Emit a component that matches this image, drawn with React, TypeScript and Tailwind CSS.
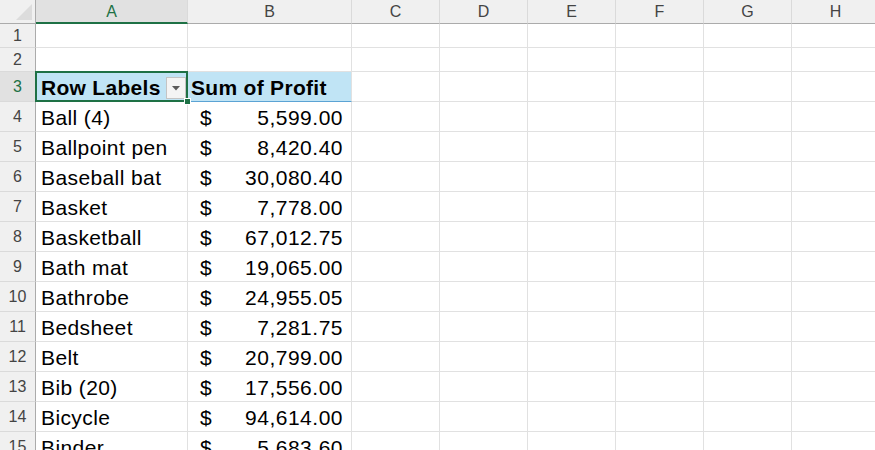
import React from "react";

const data: [string, string][] = [
  ["Ball (4)", "5,599.00"],
  ["Ballpoint pen", "8,420.40"],
  ["Baseball bat", "30,080.40"],
  ["Basket", "7,778.00"],
  ["Basketball", "67,012.75"],
  ["Bath mat", "19,065.00"],
  ["Bathrobe", "24,955.05"],
  ["Bedsheet", "7,281.75"],
  ["Belt", "20,799.00"],
  ["Bib (20)", "17,556.00"],
  ["Bicycle", "94,614.00"],
  ["Binder", "5,683.60"],
];

const cols = ["A", "B", "C", "D", "E", "F", "G", "H"];
const emptyCols = ["C", "D", "E", "F", "G", "H"];

const font = { fontFamily: '"Liberation Sans", Arial, sans-serif' };

function RowHeader({ n, h, selected }: { n: number; h: string; selected?: boolean }) {
  return (
    <div
      className={`${h} flex items-center justify-center border-r border-b border-r-[#ababab] border-b-[#dadada] pt-px text-[16px] ${
        selected ? "bg-[#e1e1e1] text-[#1e7145]" : "bg-[#f0f0f0] text-[#444]"
      }`}
    >
      {n}
    </div>
  );
}

function Empty({ h }: { h: string }) {
  return <div className={`${h} border-r border-b border-[#e1e1e1] bg-white`} />;
}

export default function App() {
  return (
    <div className="relative h-[450px] w-[875px] overflow-hidden bg-white" style={font}>
      <div className="grid w-[880px] grid-cols-[36px_152px_164px_repeat(6,88px)]">
        {/* header row */}
        <div className="relative h-[24px] border-r border-b border-r-[#ababab] border-b-[#ababab] bg-[#f0f0f0]">
          <svg className="absolute bottom-[3px] right-[3px]" width="16" height="16" viewBox="0 0 16 16">
            <polygon points="16,0 16,16 0,16" fill="#dcdcdc" />
          </svg>
        </div>
        {cols.map((c) => (
          <div
            key={c}
            className={`flex h-[24px] items-center justify-center border-r text-[16px] ${
              c === "A"
                ? "border-b-2 border-b-[#1e7145] border-r-[#dadada] bg-[#e1e1e1] text-[#1e7145]"
                : "border-b border-b-[#ababab] border-r-[#dadada] bg-[#f0f0f0] text-[#444]"
            }`}
          >
            <span className="pt-px">{c}</span>
          </div>
        ))}

        {/* rows 1-2 */}
        {[1, 2].map((n) => (
          <React.Fragment key={n}>
            <RowHeader n={n} h="h-[24px]" />
            {cols.map((c) => (
              <Empty key={c} h="h-[24px]" />
            ))}
          </React.Fragment>
        ))}

        {/* row 3 pivot header */}
        <RowHeader n={3} h="h-[30px]" selected />
        <div className="relative flex h-[30px] items-end border-b border-[#5ba3d4] bg-[#c0e4f5] pb-px pl-[5px] text-[21px] font-bold leading-[24px] tracking-[0.3px] text-black">
          Row Labels
          <div className="absolute right-[2px] top-[5px] flex h-[22px] w-[20px] items-center justify-center border border-[#c4c4c4] bg-[#f4f4f4]">
            <svg width="8" height="5" viewBox="0 0 8 5">
              <polygon points="0,0 8,0 4,4.5" fill="#5a5a5a" />
            </svg>
          </div>
        </div>
        <div className="flex h-[30px] items-end border-r border-b border-r-[#e1e1e1] border-b-[#5ba3d4] bg-[#c0e4f5] pb-px pl-[3px] text-[21px] font-bold leading-[24px] tracking-[0.3px] text-black">
          Sum of Profit
        </div>
        {emptyCols.map((c) => (
          <Empty key={c} h="h-[30px]" />
        ))}

        {/* data rows */}
        {data.map(([label, val], i) => (
          <React.Fragment key={label}>
            <RowHeader n={i + 4} h="h-[30px]" />
            <div className="flex h-[30px] items-end border-r border-b border-[#e1e1e1] bg-white pb-px pl-[5px] text-[21px] leading-[24px] tracking-[0.4px] text-black whitespace-nowrap">
              {label}
            </div>
            <div className="flex h-[30px] items-end justify-between border-r border-b border-[#e1e1e1] bg-white pb-px pl-[12px] pr-[8px] text-[21px] leading-[24px] tracking-[0.5px] text-black whitespace-nowrap">
              <span>$</span>
              <span>{val}</span>
            </div>
            {emptyCols.map((c) => (
              <Empty key={c} h="h-[30px]" />
            ))}
          </React.Fragment>
        ))}
      </div>

      {/* selection border around A3 */}
      <div className="pointer-events-none absolute left-[35px] top-[71px] h-[31px] w-[153px] border-2 border-[#1e7145]" />
      <div className="pointer-events-none absolute left-[184px] top-[98px] h-[7px] w-[7px] border border-white bg-[#1e7145]" />
    </div>
  );
}
